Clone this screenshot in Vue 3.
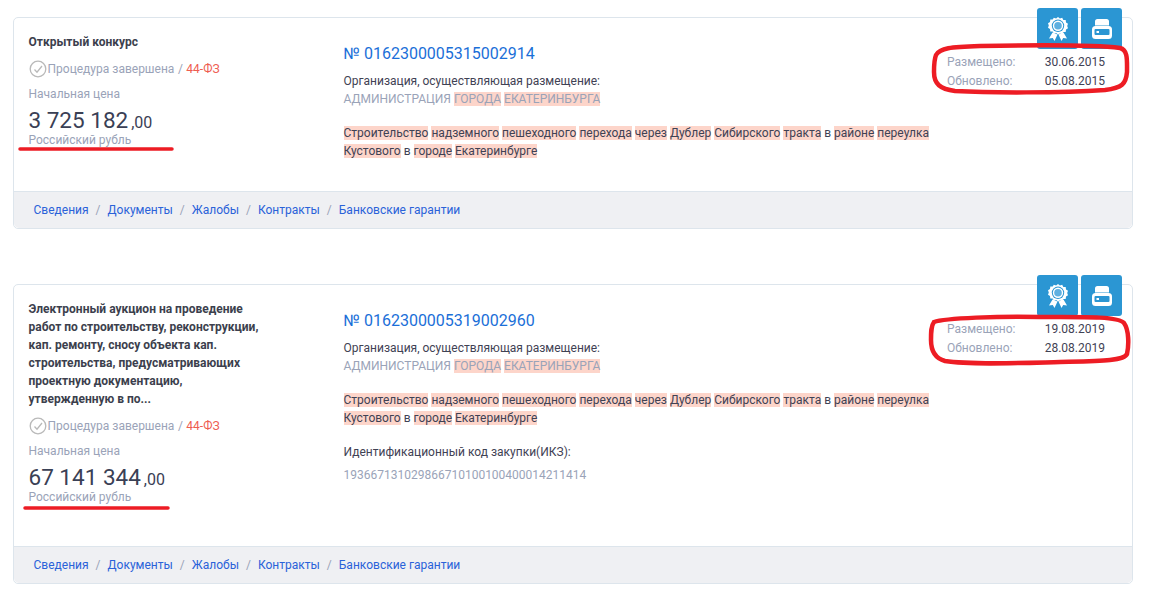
<script setup>
const cards = [
  { title: 'Открытый конкурс', num: '0162300005315002914', price: '3 725 182', placed: '30.06.2015', updated: '05.08.2015', height: 173, ikz: '',
    ul: 'M20 149 L172 149', ring: 'M936 55 C940 48 950 47 980 46 C1030 45 1090 44 1120 48 C1128 50 1127 60 1127 72 C1126 84 1122 88 1105 90 C1060 93 990 93 955 91 C940 89 934 84 934 72 C934 66 934 60 936 55 Z' },
  { title: 'Электронный аукцион на проведение работ по строительству, реконструкции, кап. ремонту, сносу объекта кап. строительства, предусматривающих проектную документацию, утвержденную в по...', num: '0162300005319002960', price: '67 141 344', placed: '19.08.2019', updated: '28.08.2019', height: 261, ikz: '193667131029866710100100400014211414',
    ul: 'M25 508 L168 508', ring: 'M934 322 C945 318 1000 316 1040 317 C1080 317 1118 316 1124 323 C1129 330 1129 345 1127 354 C1124 361 1100 361 1060 362 C1020 363 970 365 945 361 C934 358 931 350 931 340 C931 332 931 326 934 322 Z' }
]
</script>

<template>
  <div class="page">
    <article v-for="c in cards" :key="c.num" class="card">
      <div class="actions">
        <button class="act" aria-label="Сертификат">
          <svg width="20" height="24" viewBox="0 0 20 24" fill="none">
            <path d="M10 0l1.900 1.500 2.300-.8 1.100 2.200 2.400.2.300 2.400 2 1.200-.8 2.300.8 2.300-2 1.200-.3 2.400-2.400.2-1.100 2.200-2.300-.8L10 17.500l-1.900-1.500-2.300.8-1.100-2.200-2.400-.2-.3-2.400-2-1.200.8-2.300-.8-2.300 2-1.200.3-2.400 2.400-.2L5.800.7l2.300.8z" fill="#fff"/>
            <circle cx="10" cy="8.800" r="6.200" fill="#2b96d3"/>
            <circle cx="10" cy="8.800" r="5.200" fill="#fff"/>
            <circle cx="10" cy="8.800" r="3.800" fill="#5fb0e0"/>
            <path d="M4.500 15.500L1 21.500l3.800-.5 1.700 3 3-6.500zM15.500 15.500l3.500 6-3.800-.5-1.700 3-3-6.500z" fill="#fff"/>
          </svg>
        </button>
        <button class="act" aria-label="Печать">
          <svg width="20" height="20" viewBox="0 0 20 20" fill="none">
            <path d="M3 6.500V2.500A2.500 2.500 0 0 1 5.500 0h9A2.500 2.500 0 0 1 17 2.500v4z" fill="#fff"/>
            <rect x="0" y="7" width="20" height="13" rx="3.500" fill="#fff"/>
            <rect x="2.500" y="10" width="15" height="6" rx="1" fill="#2b96d3"/>
            <rect x="4.500" y="12" width="2.500" height="2" fill="#fff"/>
          </svg>
        </button>
      </div>
      <div class="body" :style="{ height: c.height + 'px' }">
        <div class="left">
          <div class="title">{{ c.title }}</div>
          <div class="status">
            <svg class="check" width="18" height="18" viewBox="0 0 18 18" fill="none">
              <circle cx="9" cy="9" r="7.800" stroke="#b9b9b9" stroke-width="1.300"/>
              <path d="M5.500 9.500l2.500 2.700 5-6.200" stroke="#b9b9b9" stroke-width="1.300"/>
            </svg>
            <span>Процедура завершена</span>
            <span class="sl">/</span>
            <span class="law">44-ФЗ</span>
          </div>
          <div class="lbl">Начальная цена</div>
          <div class="price">{{ c.price }}<small>,00</small></div>
          <div class="cur">Российский рубль</div>
        </div>
        <div class="mid">
          <a class="num">№ {{ c.num }}</a>
          <div class="org">Организация, осуществляющая размещение:</div>
          <div class="orgname">АДМИНИСТРАЦИЯ <mark>ГОРОДА</mark> <mark>ЕКАТЕРИНБУРГА</mark></div>
          <p class="desc"><mark>Строительство</mark> <mark>надземного</mark> <mark>пешеходного</mark> <mark>перехода</mark> <mark>через</mark> <mark>Дублер</mark> <mark>Сибирского</mark> <mark>тракта</mark> в <mark>районе</mark> <mark>переулка</mark> <mark>Кустового</mark> в <mark>городе</mark> <mark>Екатеринбурге</mark></p>
          <template v-if="c.ikz">
            <div class="ikzl">Идентификационный код закупки(ИКЗ):</div>
            <div class="ikz">{{ c.ikz }}</div>
          </template>
        </div>
        <dl class="dates">
          <div class="dr"><dt>Размещено:</dt><dd>{{ c.placed }}</dd></div>
          <div class="dr"><dt>Обновлено:</dt><dd>{{ c.updated }}</dd></div>
        </dl>
      </div>
      <nav class="foot">
        <a>Сведения</a><i>/</i><a>Документы</a><i>/</i><a>Жалобы</a><i>/</i><a>Контракты</a><i>/</i><a>Банковские гарантии</a>
      </nav>
    </article>
    <svg class="marks" width="1152" height="591" viewBox="0 0 1152 591" fill="none">
      <g v-for="c in cards" :key="c.num" stroke="#ed1c24" stroke-linecap="round">
        <path :d="c.ul" stroke-width="3.500"/>
        <path :d="c.ring" stroke-width="4.500"/>
      </g>
    </svg>
  </div>
</template>

<style scoped>
.page {
  position: relative;
  width: 1152px;
  height: 591px;
  overflow: hidden;
  padding: 17px 19px 0 13px;
  box-sizing: border-box;
  font-family: Roboto, "Liberation Sans", sans-serif;
  font-size: 12px;
  color: #3f4254;
  background: #fff;
}
.card {
  position: relative;
  border: 1px solid #dde5ec;
  border-radius: 5px;
  margin-bottom: 55px;
}
.actions {
  position: absolute;
  top: -10px;
  right: 10px;
  display: flex;
  gap: 3px;
}
.act {
  width: 41px;
  height: 41px;
  border: 0;
  padding: 0;
  border-radius: 3px;
  background: #2b96d3;
  display: flex;
  align-items: center;
  justify-content: center;
}
.body {
  display: flex;
  box-sizing: border-box;
  padding: 14px 27px 0 14.500px;
}
.left { width: 230px; margin-right: 85px; flex: none; }
.mid { flex: 1; padding-top: 12px; }
.title { font-weight: 700; line-height: 18px; color: #3c3f4d; padding-top: 1px; }
.status {
  display: flex;
  align-items: center;
  height: 18px;
  margin-top: 9px;
  color: #9aa3b8;
}
.check { margin-right: 1px; flex: none; }
.sl { margin: 0 3.500px; }
.law { color: #ee5d50; }
.lbl { color: #9aa3b8; line-height: 18px; margin-top: 7px; }
.price { font-size: 22.500px; line-height: 28px; color: #3a4055; margin-top: 3px; white-space: nowrap; }
.price small { font-size: 16px; margin-left: 3px; }
.cur { color: #9aa3b8; line-height: 14px; margin-top: -4px; }
.num { display: block; font-size: 16px; line-height: 20px; color: #1b6fd8; }
.org { line-height: 18px; margin-top: 8px; }
.orgname { line-height: 18px; color: #9aa3b8; }
mark { background: #fdd5ca; color: inherit; }
.desc { margin: 16px 0 0; line-height: 18px; width: 600px; }
.ikzl { margin-top: 16px; line-height: 18px; }
.ikz { margin-top: 5px; line-height: 18px; color: #9aa3b8; }
.dates { margin: 21px 0 0; width: 158px; flex: none; }
.dr { display: flex; line-height: 19px; }
dt { width: 98px; color: #9aa3b8; }
dd { margin: 0; color: #3f4254; }
.foot {
  height: 37px;
  box-sizing: border-box;
  padding: 0 19.500px;
  display: flex;
  align-items: center;
  background: #eff0f3;
  border-top: 1px solid #dde5ec;
  border-radius: 0 0 5px 5px;
  color: #2a62d9;
}
.foot i { font-style: normal; color: #9aa3b8; margin: 0 7px; }
.marks { position: absolute; left: 0; top: 0; pointer-events: none; }
</style>
